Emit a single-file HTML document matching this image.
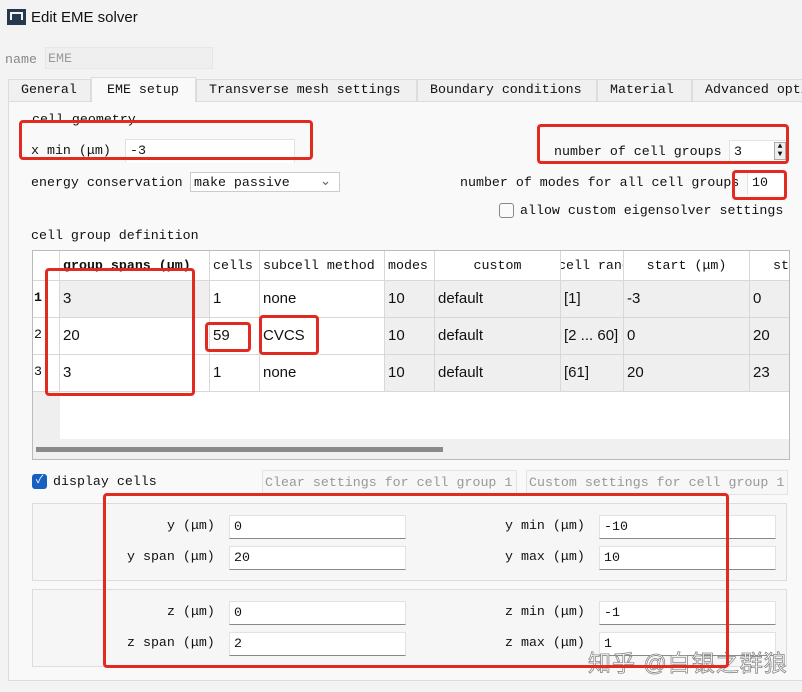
<!DOCTYPE html>
<html><head><meta charset="utf-8"><style>
*{box-sizing:border-box;margin:0;padding:0}
body{width:802px;height:692px;background:#f3f3f3;position:relative;overflow:hidden;font-family:"Liberation Mono","Noto Sans CJK SC",monospace;font-size:13.3px;color:#111}
.a{position:absolute;white-space:nowrap}
.red{position:absolute;border:3px solid #e32a22;border-radius:4px}
.inp{position:absolute;background:#fff;border:1px solid #e2e2e2;border-bottom:1px solid #888;height:24px;padding:3px 4px;font-size:13.3px}
.tab{position:absolute;top:79px;height:22px;border:1px solid #dcdcdc;border-bottom:none;background:#f0f0f0;padding:2px 0 0 12px;white-space:nowrap;overflow:hidden}
.sans{font-family:"Liberation Sans",sans-serif;font-size:15px}
.c{position:absolute;border-right:1px solid #d8d8d8;border-bottom:1px solid #d8d8d8;padding:9px 3px 0 3px;white-space:nowrap;overflow:hidden}
.h{background:#fff;padding-top:7px;font-size:13.3px}
.g{background:#efefef}
.w{background:#fff}
</style></head><body>
<div class="a" style="left:0;top:0;width:802px;height:38px;background:#f3f3f3"></div>
<div class="a" style="left:7px;top:9px;width:19px;height:16px;background:#24384e"></div>
<div class="a" style="left:10px;top:12px;width:13px;height:8px;background:#f3f3f3"></div>
<div class="a" style="left:12px;top:14px;width:9px;height:6px;background:#24384e"></div>
<div class="a" style="left:31px;top:9px;font-family:'Liberation Sans',sans-serif;font-size:15px">Edit EME solver</div>
<div class="a" style="left:5px;top:52px;color:#888">name</div>
<div class="a" style="left:45px;top:47px;width:168px;height:22px;background:#efefef;border:1px solid #e6e6e6;color:#999;padding:3px 2px">EME</div>
<div class="a" style="left:8px;top:101px;width:800px;height:580px;background:#f9f9f9;border:1px solid #dcdcdc"></div>
<div class="tab" style="left:8px;width:83px">General</div>
<div class="tab" style="left:91px;width:105px;background:#f9f9f9;top:77px;height:25px;padding-top:4px;padding-left:15px">EME setup</div>
<div class="tab" style="left:196px;width:221px">Transverse mesh settings</div>
<div class="tab" style="left:417px;width:180px">Boundary conditions</div>
<div class="tab" style="left:597px;width:95px">Material</div>
<div class="tab" style="left:692px;width:120px">Advanced options</div>
<div class="a" style="left:32px;top:112px">cell geometry</div>
<div class="a" style="left:31px;top:143px">x min (μm)</div>
<div class="inp" style="left:125px;top:139px;width:170px;border-bottom-color:#fff">-3</div>
<div class="a" style="left:31px;top:175px">energy conservation</div>
<div class="a" style="left:190px;top:172px;width:150px;height:20px;background:#fff;border:1px solid #ccc;padding:2px 3px">make passive<span style="position:absolute;right:8px;top:1px;color:#666">⌄</span></div>
<div class="a" style="left:554px;top:144px">number of cell groups</div>
<div class="inp" style="left:729px;top:140px;width:58px;border-bottom-color:#fff">3</div>
<div class="a" style="left:774px;top:142px;width:12px;height:18px;border:1px solid #aaa;background:#eee;font-size:8px;line-height:8px;text-align:center">▲<br>▼</div>
<div class="a" style="left:460px;top:175px">number of modes for all cell groups</div>
<div class="inp" style="left:747px;top:171px;width:40px;border-bottom-color:#fff">10</div>
<div class="a" style="left:499px;top:203px;width:15px;height:15px;border:1px solid #888;border-radius:3px;background:#fafafa"></div>
<div class="a" style="left:520px;top:203px">allow custom eigensolver settings</div>
<div class="a" style="left:31px;top:228px">cell group definition</div>
<div class="a" style="left:32px;top:250px;width:758px;height:210px;background:#efefef;border:1px solid #bbb;overflow:hidden">
<div class="a" style="left:27px;top:0;width:740px;height:188px;background:#fff"></div>
<div class="c h" style="left:0;top:0;width:27px;height:30px"></div>
<div class="c h" style="left:27px;top:0;width:150px;height:30px;font-weight:bold">group spans (μm)</div>
<div class="c h" style="left:177px;top:0;width:50px;height:30px">cells</div>
<div class="c h" style="left:227px;top:0;width:125px;height:30px">subcell method</div>
<div class="c h" style="left:352px;top:0;width:50px;height:30px">modes</div>
<div class="c h" style="left:402px;top:0;width:126px;height:30px;text-align:center">custom</div>
<div class="c h" style="left:528px;top:0;width:63px;height:30px;text-indent:-6px">cell range</div>
<div class="c h" style="left:591px;top:0;width:126px;height:30px;text-align:center">start (μm)</div>
<div class="c h" style="left:717px;top:0;width:50px;height:30px;text-indent:20px">stop</div>
<div class="c w" style="left:0;top:30px;width:27px;height:37px;font-weight:bold;padding-left:1px">1</div>
<div class="c w" style="left:0;top:67px;width:27px;height:37px;padding-left:1px">2</div>
<div class="c w" style="left:0;top:104px;width:27px;height:37px;padding-left:1px">3</div>
<div class="c g sans" style="left:27px;top:30px;width:150px;height:37px">3</div>
<div class="c w sans" style="left:27px;top:67px;width:150px;height:37px">20</div>
<div class="c w sans" style="left:27px;top:104px;width:150px;height:37px">3</div>
<div class="c w sans" style="left:177px;top:30px;width:50px;height:37px">1</div>
<div class="c w sans" style="left:177px;top:67px;width:50px;height:37px">59</div>
<div class="c w sans" style="left:177px;top:104px;width:50px;height:37px">1</div>
<div class="c w sans" style="left:227px;top:30px;width:125px;height:37px">none</div>
<div class="c w sans" style="left:227px;top:67px;width:125px;height:37px">CVCS</div>
<div class="c w sans" style="left:227px;top:104px;width:125px;height:37px">none</div>
<div class="c g sans" style="left:352px;top:30px;width:50px;height:37px">10</div>
<div class="c g sans" style="left:352px;top:67px;width:50px;height:37px">10</div>
<div class="c g sans" style="left:352px;top:104px;width:50px;height:37px">10</div>
<div class="c g sans" style="left:402px;top:30px;width:126px;height:37px">default</div>
<div class="c g sans" style="left:402px;top:67px;width:126px;height:37px">default</div>
<div class="c g sans" style="left:402px;top:104px;width:126px;height:37px">default</div>
<div class="c g sans" style="left:528px;top:30px;width:63px;height:37px">[1]</div>
<div class="c g sans" style="left:528px;top:67px;width:63px;height:37px">[2 ... 60]</div>
<div class="c g sans" style="left:528px;top:104px;width:63px;height:37px">[61]</div>
<div class="c g sans" style="left:591px;top:30px;width:126px;height:37px">-3</div>
<div class="c g sans" style="left:591px;top:67px;width:126px;height:37px">0</div>
<div class="c g sans" style="left:591px;top:104px;width:126px;height:37px">20</div>
<div class="c g sans" style="left:717px;top:30px;width:50px;height:37px">0</div>
<div class="c g sans" style="left:717px;top:67px;width:50px;height:37px">20</div>
<div class="c g sans" style="left:717px;top:104px;width:50px;height:37px">23</div>
<div class="a" style="left:0;top:188px;width:758px;height:22px;background:#f0f0f0"></div>
<div class="a" style="left:3px;top:196px;width:407px;height:5px;background:#8a8a8a"></div>
</div>
<div class="a" style="left:32px;top:474px;width:15px;height:15px;background:#1560c0;border-radius:3px;color:#fff;font-size:11px;line-height:15px;text-align:center">✓</div>
<div class="a" style="left:53px;top:474px">display cells</div>
<div class="a" style="left:262px;top:470px;width:255px;height:25px;border:1px solid #e4e4e4;background:#f7f7f7;color:#999;padding:4px 2px">Clear settings for cell group 1</div>
<div class="a" style="left:526px;top:470px;width:262px;height:25px;border:1px solid #e4e4e4;background:#f7f7f7;color:#999;padding:4px 2px">Custom settings for cell group 1</div>
<div class="a" style="left:32px;top:503px;width:755px;height:78px;border:1px solid #dcdcdc;background:#f6f6f6"></div>
<div class="a" style="left:32px;top:589px;width:755px;height:78px;border:1px solid #dcdcdc;background:#f6f6f6"></div>
<div class="a" style="left:167px;top:518px">y (μm)</div>
<div class="a" style="left:127px;top:549px">y span (μm)</div>
<div class="a" style="left:505px;top:518px">y min (μm)</div>
<div class="a" style="left:505px;top:549px">y max (μm)</div>
<div class="inp" style="left:229px;top:515px;width:177px">0</div>
<div class="inp" style="left:229px;top:546px;width:177px">20</div>
<div class="inp" style="left:599px;top:515px;width:177px">-10</div>
<div class="inp" style="left:599px;top:546px;width:177px">10</div>
<div class="a" style="left:167px;top:604px">z (μm)</div>
<div class="a" style="left:127px;top:635px">z span (μm)</div>
<div class="a" style="left:505px;top:604px">z min (μm)</div>
<div class="a" style="left:505px;top:635px">z max (μm)</div>
<div class="inp" style="left:229px;top:601px;width:177px">0</div>
<div class="inp" style="left:229px;top:632px;width:177px">2</div>
<div class="inp" style="left:599px;top:601px;width:177px">-1</div>
<div class="inp" style="left:599px;top:632px;width:177px">1</div>
<div class="a" style="left:588px;top:644px;font-family:'Liberation Sans','Noto Sans CJK SC',sans-serif;font-size:23px;letter-spacing:1px;color:#fff;-webkit-text-stroke:0.8px #888">知乎 @白银之群狼</div>
<div class="red" style="left:19px;top:120px;width:294px;height:40px"></div>
<div class="red" style="left:537px;top:124px;width:252px;height:40px"></div>
<div class="red" style="left:732px;top:170px;width:55px;height:30px"></div>
<div class="red" style="left:45px;top:268px;width:150px;height:128px"></div>
<div class="red" style="left:205px;top:322px;width:46px;height:30px"></div>
<div class="red" style="left:259px;top:315px;width:60px;height:40px"></div>
<div class="red" style="left:103px;top:493px;width:626px;height:175px"></div>
</body></html>
